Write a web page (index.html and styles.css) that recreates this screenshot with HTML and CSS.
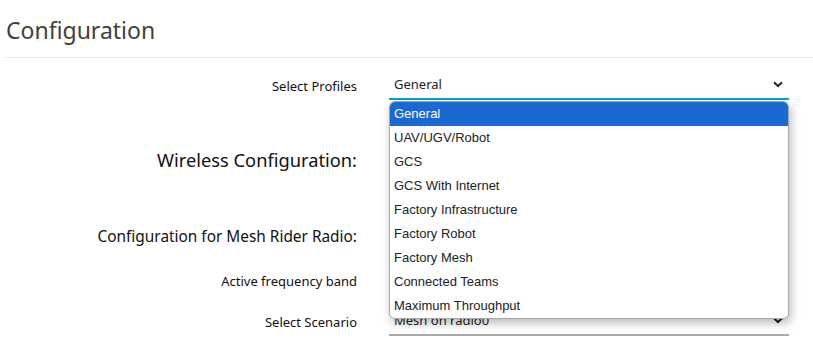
FILE: index.html
```html
<!DOCTYPE html>
<html lang="en">
<head>
    <meta charset="UTF-8">
    <meta name="viewport" content="width=device-width, initial-scale=1.0">
    <title>Configuration</title>
    <link rel="stylesheet" href="styles.css">
</head>
<body>
    <div class="page">
        <h1 class="page-title">Configuration</h1>

        <div class="config-form">
            <!-- Profile selector, opened -->
            <div class="form-row">
                <div class="form-label">Select Profiles</div>
                <div class="form-field">
                    <div class="select select-focus">
                        <span>General</span>
                        <svg class="chevron" width="10" height="7" viewBox="0 0 10 7"><path d="M1 1.2 L5 5 L9 1.2" fill="none" stroke="#222" stroke-width="2"/></svg>
                    </div>
                    <ul class="dropdown">
                        <li class="selected">General</li>
                        <li>UAV/UGV/Robot</li>
                        <li>GCS</li>
                        <li>GCS With Internet</li>
                        <li>Factory Infrastructure</li>
                        <li>Factory Robot</li>
                        <li>Factory Mesh</li>
                        <li>Connected Teams</li>
                        <li>Maximum Throughput</li>
                    </ul>
                </div>
            </div>

            <div class="form-row section-row">
                <div class="form-label section-title">Wireless Configuration:</div>
            </div>

            <div class="form-row subsection-row">
                <div class="form-label subsection-title">Configuration for Mesh Rider Radio:</div>
            </div>

            <div class="form-row band-row">
                <div class="form-label">Active frequency band</div>
                <div class="form-field">
                    <div class="select">
                        <span></span>
                        <svg class="chevron" width="10" height="7" viewBox="0 0 10 7"><path d="M1 1.2 L5 5 L9 1.2" fill="none" stroke="#222" stroke-width="2"/></svg>
                    </div>
                </div>
            </div>

            <div class="form-row scenario-row">
                <div class="form-label">Select Scenario</div>
                <div class="form-field">
                    <div class="select">
                        <span>Mesh on radio0</span>
                        <svg class="chevron" width="10" height="7" viewBox="0 0 10 7"><path d="M1 1.2 L5 5 L9 1.2" fill="none" stroke="#222" stroke-width="2"/></svg>
                    </div>
                </div>
            </div>
        </div>
    </div>
</body>
</html>
```

FILE: styles.css
```css
* {
    box-sizing: border-box;
    margin: 0;
    padding: 0;
}

body {
    background-color: #fff;
    color: #111;
    font-family: "Noto Sans", "Open Sans", sans-serif;
    overflow: hidden;
}

.page {
    padding-left: 5px;
}

.page-title {
    font-weight: normal;
    font-size: 23px;
    line-height: 32px;
    color: #404040;
    padding: 14px 0 11px 1px;
    border-bottom: 1px solid #e8e8e8;
    margin-bottom: 12px;
}

.form-row {
    display: grid;
    grid-template-columns: 352px 400px;
    column-gap: 32px;
    align-items: center;
    height: 30px;
}

.form-label {
    text-align: right;
    font-size: 13px;
    padding-top: 1px;
}

.form-field {
    position: relative;
}

.select {
    display: flex;
    align-items: center;
    justify-content: space-between;
    height: 30px;
    padding: 1px 5px 1px 5px;
    border-bottom: 2px solid #aaa;
    font-size: 13px;
    color: #222;
}

.select-focus {
    border-bottom-color: #00a5d4;
}

.chevron {
    margin-right: 1px;
}

.section-row {
    margin-top: 45px;
    height: 28px;
}

.section-title {
    font-size: 18.3px;
}

.subsection-row {
    margin-top: 51px;
    height: 24px;
}

.subsection-title {
    font-size: 15.4px;
}

.band-row {
    margin-top: 17px;
}

.scenario-row {
    margin-top: 11px;
}

/* open list of the profile select */
.dropdown {
    position: absolute;
    top: 31px;
    left: 0;
    width: 400px;
    list-style: none;
    background-color: #fff;
    border: 1px solid #a8a8a8;
    border-radius: 6px;
    box-shadow: 2px 4px 10px rgba(0, 0, 0, 0.28);
    overflow: hidden;
    z-index: 10;
    font-family: "Liberation Sans", Arial, sans-serif;
    font-size: 13px;
    color: #222;
}

.dropdown li {
    height: 24px;
    line-height: 24px;
    padding-left: 4px;
}

.dropdown li.selected {
    background-color: #1a68d2;
    color: #fff;
}
```
